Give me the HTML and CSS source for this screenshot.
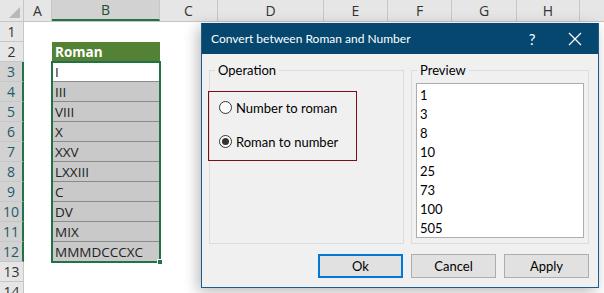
FILE: index.html
```html
<!DOCTYPE html>
<html lang="en">
<head>
    <meta charset="UTF-8">
    <title>Convert between Roman and Number</title>
    <link rel="stylesheet" href="styles.css">
</head>
<body>
    <div class="sheet">
        <div class="col-head">
            <div class="corner"><span class="corner-mark"></span></div>
            <div class="ch c-a">A</div>
            <div class="ch c-b selected">B</div>
            <div class="ch c-c">C</div>
            <div class="ch c-d">D</div>
            <div class="ch c-e">E</div>
            <div class="ch c-f">F</div>
            <div class="ch c-g">G</div>
            <div class="ch c-h">H</div>
            <div class="ch c-rest"></div>
        </div>

        <div class="row"><div class="rh">1</div><div class="cell c-a"></div><div class="cell c-b"></div></div>
        <div class="row"><div class="rh">2</div><div class="cell c-a"></div><div class="cell c-b title-cell">Roman</div></div>
        <div class="row"><div class="rh selected">3</div><div class="cell c-a"></div><div class="cell c-b data active">I</div></div>
        <div class="row"><div class="rh selected">4</div><div class="cell c-a"></div><div class="cell c-b data">III</div></div>
        <div class="row"><div class="rh selected">5</div><div class="cell c-a"></div><div class="cell c-b data">VIII</div></div>
        <div class="row"><div class="rh selected">6</div><div class="cell c-a"></div><div class="cell c-b data">X</div></div>
        <div class="row"><div class="rh selected">7</div><div class="cell c-a"></div><div class="cell c-b data">XXV</div></div>
        <div class="row"><div class="rh selected">8</div><div class="cell c-a"></div><div class="cell c-b data">LXXIII</div></div>
        <div class="row"><div class="rh selected">9</div><div class="cell c-a"></div><div class="cell c-b data">C</div></div>
        <div class="row"><div class="rh selected">10</div><div class="cell c-a"></div><div class="cell c-b data">DV</div></div>
        <div class="row"><div class="rh selected">11</div><div class="cell c-a"></div><div class="cell c-b data">MIX</div></div>
        <div class="row"><div class="rh selected">12</div><div class="cell c-a"></div><div class="cell c-b data">MMMDCCCXC</div></div>
        <div class="row"><div class="rh">13</div><div class="cell c-a"></div><div class="cell c-b"></div></div>
        <div class="row"><div class="rh">14</div><div class="cell c-a"></div><div class="cell c-b"></div></div>

        <div class="selection"><span class="fill-handle"></span></div>
    </div>

    <div class="dialog">
        <div class="dialog-title">
            <span class="title-text">Convert between Roman and Number</span>
            <span class="title-btn">?</span>
            <span class="title-btn close">
                <svg width="14" height="14" viewBox="0 0 14 14"><path d="M1 1 L13 13 M13 1 L1 13" stroke="#fff" stroke-width="1.3" fill="none"/></svg>
            </span>
        </div>
        <div class="dialog-body">
            <div class="groups">
                <fieldset class="group operation">
                    <legend>Operation</legend>
                    <div class="options">
                        <label class="radio"><span class="dot"></span>Number to roman</label>
                        <label class="radio"><span class="dot checked"></span>Roman to number</label>
                    </div>
                </fieldset>
                <fieldset class="group preview">
                    <legend>Preview</legend>
                    <div class="listbox">
                        <div>1</div>
                        <div>3</div>
                        <div>8</div>
                        <div>10</div>
                        <div>25</div>
                        <div>73</div>
                        <div>100</div>
                        <div>505</div>
                    </div>
                </fieldset>
            </div>
            <div class="buttons">
                <button class="btn default">Ok</button>
                <button class="btn">Cancel</button>
                <button class="btn">Apply</button>
            </div>
        </div>
    </div>
</body>
</html>
```

FILE: styles.css
```css
* {
    margin: 0;
    padding: 0;
    box-sizing: border-box;
}

body {
    width: 604px;
    height: 293px;
    overflow: hidden;
    background: #fff;
    font-family: 'Lato', 'Segoe UI', sans-serif;
    position: relative;
}

/* spreadsheet */

.sheet {
    position: relative;
    font-family: 'Open Sans', sans-serif;
    font-size: 13px;
    color: #222;
}

.col-head {
    display: flex;
    height: 22px;
    background: #e6e6e6;
    border-bottom: 1px solid #c6c6c6;
}

.corner {
    width: 24px;
    position: relative;
    border-right: 1px solid #c6c6c6;
}

.corner-mark {
    position: absolute;
    right: 3px;
    bottom: 3px;
    width: 0;
    height: 0;
    border-left: 11px solid transparent;
    border-bottom: 11px solid #b8b8b8;
}

.ch {
    display: flex;
    align-items: center;
    justify-content: center;
    border-right: 1px solid #c6c6c6;
    color: #333;
    font-size: 14px;
}

.ch.selected {
    background: #d2d2d2;
    border-bottom: 2px solid #217346;
    color: #1e4e2e;
}

.c-a { width: 28px; }
.c-b { width: 108px; }
.c-c { width: 58px; }
.c-d { width: 106px; }
.c-e { width: 64px; }
.c-f { width: 64px; }
.c-g { width: 65px; }
.c-h { width: 63px; }
.c-rest { flex: 1; border-right: none; }

.row {
    display: flex;
    height: 20px;
}

.rh {
    width: 24px;
    background: #e6e6e6;
    border-right: 1px solid #c6c6c6;
    border-bottom: 1px solid #c6c6c6;
    display: flex;
    align-items: center;
    justify-content: center;
    font-size: 14px;
    color: #333;
}

.rh.selected {
    background: #d2d2d2;
    border-right: 2px solid #217346;
    color: #1d5a6a;
}

.cell {
    display: flex;
    align-items: center;
    padding-left: 3px;
    font-size: 13.5px;
}

.title-cell {
    background: #548235;
    color: #fff;
    font-weight: bold;
}

.data {
    background: #c9c9c9;
    border-bottom: 1px solid #8a8a8a;
}

.data.active {
    background: #fff;
}

.selection {
    position: absolute;
    left: 51px;
    top: 61px;
    width: 110px;
    height: 202px;
    border: 2px solid #217346;
}

.fill-handle {
    position: absolute;
    right: -4px;
    bottom: -4px;
    width: 6px;
    height: 6px;
    background: #217346;
    border: 1px solid #fff;
}

/* dialog */

.dialog {
    position: absolute;
    left: 201px;
    top: 23px;
    width: 398px;
    height: 265px;
    background: #f0f0f0;
    border: 1px solid #1e5a8a;
    border-top: none;
    box-shadow: -3px 4px 14px rgba(0, 0, 0, 0.28);
    font-size: 13px;
    color: #000;
}

.dialog-title {
    height: 31px;
    background: #05476e;
    color: #fff;
    display: flex;
    align-items: center;
    padding-left: 9px;
}

.title-text {
    flex: 1;
    font-size: 12px;
}

.title-btn {
    width: 40px;
    text-align: center;
    font-size: 15px;
}

.title-btn.close {
    width: 46px;
    display: flex;
    justify-content: center;
}

.dialog-body {
    padding: 8px 9px 0 7px;
}

.groups {
    display: flex;
    gap: 7px;
    height: 182px;
}

.group {
    border: 1px solid #dcdcdc;
    padding: 0 4px;
}

.group legend {
    padding: 0 3px;
    margin-left: 1px;
    font-size: 13px;
    line-height: 16px;
}

.operation {
    width: 195px;
}

.preview {
    flex: 1;
}

.options {
    width: 149px;
    height: 70px;
    margin: 13px 0 0 -6px;
    border: 1px solid #7a0c1c;
    padding: 6px 0 0 10px;
    display: flex;
    flex-direction: column;
    gap: 15px;
}

.radio {
    display: flex;
    align-items: center;
    gap: 4px;
    font-size: 13px;
    height: 19px;
}

.dot {
    width: 13px;
    height: 13px;
    border: 1px solid #333;
    border-radius: 50%;
    background: #fff;
    position: relative;
}

.dot.checked::after {
    content: '';
    position: absolute;
    left: 2px;
    top: 2px;
    width: 7px;
    height: 7px;
    border-radius: 50%;
    background: #333;
}

.listbox {
    margin: 5px 0 0 0;
    height: 155px;
    background: #fff;
    border: 1px solid #adadad;
    padding: 2px 0 0 3px;
    font-size: 13px;
    line-height: 19px;
}

.buttons {
    display: flex;
    justify-content: flex-end;
    gap: 8px;
    margin-top: 10px;
}

.btn {
    width: 85px;
    height: 24px;
    background: #e1e1e1;
    border: 1px solid #adadad;
    font-family: 'Lato', sans-serif;
    font-size: 13px;
    color: #000;
}

.btn.default {
    border: 2px solid #0078d7;
}
```
